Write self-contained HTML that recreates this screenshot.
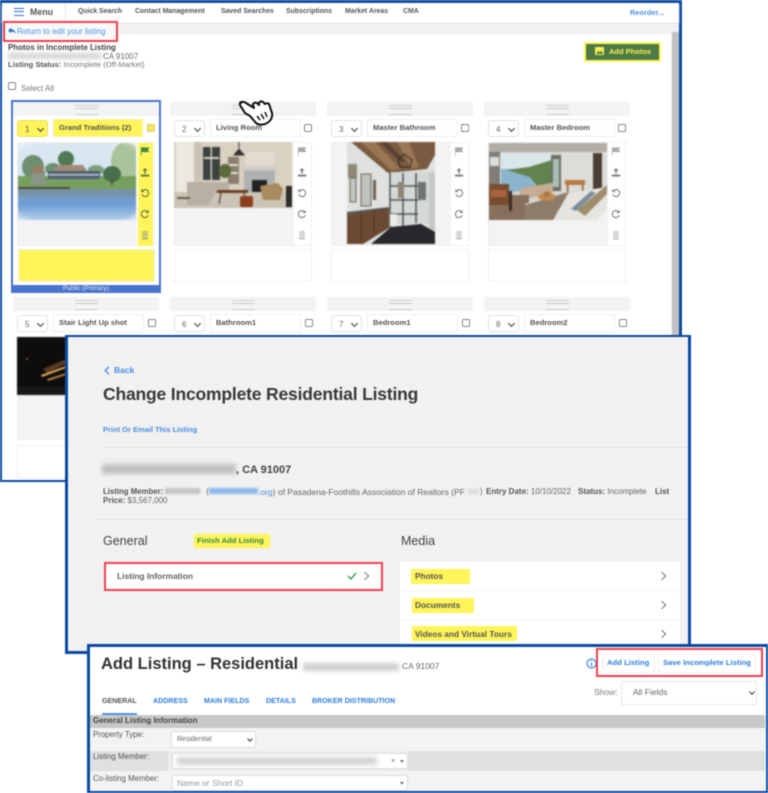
<!DOCTYPE html>
<html lang="en"><head><meta charset="utf-8"><title>Incomplete Listing</title>
<style>
*{box-sizing:border-box}
html,body{margin:0;padding:0;background:#fff}
body{width:768px;height:793px;overflow:hidden;position:relative;font-family:"Liberation Sans",sans-serif}
#root{position:absolute;left:0;top:0;width:768px;height:793px;filter:blur(.4px);overflow:hidden}
.a,.t{position:absolute}
.t{white-space:nowrap;line-height:1}
.nav{top:8.500px;font-size:6.900px;font-weight:700;color:#555}
.drag{position:absolute;width:146px;height:14px;background:#f3f3f3}
.drag:after{content:"";position:absolute;left:62px;top:3px;width:23px;height:8px;border-top:1px solid #ccc;border-bottom:1px solid #ccc;background:linear-gradient(#ccc,#ccc) 0 2px/100% 1px no-repeat}
.sel{position:absolute;width:31px;height:17px;border:1px solid #e2e2e2;border-radius:3px;background:#fff;font-size:8px;color:#666;padding:5px 0 0 7px;line-height:1}
.sel:after{content:"";position:absolute;right:4px;top:5px;width:4px;height:4px;border-right:1.400px solid #333;border-bottom:1.400px solid #333;transform:rotate(45deg)}
.nm{position:absolute;width:91px;height:18px;border:1px solid #eee;background:#fff;font-size:7.600px;font-weight:700;color:#555;padding:4px 0 0 5px;line-height:1;white-space:nowrap}
.cb{position:absolute;width:8px;height:8px;border:1px solid #888;border-radius:1.500px;background:#fff}
.well{position:absolute;width:138px;height:104px;border:1px solid #eee;background:#fff}
.gr{position:absolute;left:0;top:0;width:119px;height:102px;background:#f3f3f3}
.cap{position:absolute;width:138px;height:33px;border:1px solid #eee;background:#fff}
.ic{position:absolute;width:10px;height:10px;color:#aaa}
.blr{position:absolute;background:#c4c4c4;filter:blur(2px)}
.tab{top:698px;font-size:7.100px;font-weight:700;color:#2f7fd8}
.chev{position:absolute;width:6px;height:6px;border-top:1px solid #777;border-right:1px solid #777;transform:rotate(45deg)}
.lab{font-size:7.900px;color:#555}
</style></head><body>
<svg width="0" height="0" style="position:absolute">
<symbol id="flag" viewBox="0 0 12 12"><path d="M1.500 1.500v10M1.500 2h9l-1.500 2.500L10.500 7h-9z" fill="currentColor" stroke="currentColor" stroke-width=".8"/></symbol>
<symbol id="up" viewBox="0 0 12 12"><path d="M6 1 2.800 4.500H5v3.500h2V4.500h2.200zM1 9h10v2.500H1z" fill="currentColor"/></symbol>
<symbol id="undo" viewBox="0 0 12 12"><path d="M3 3.400A4.200 4.200 0 1 1 2.200 7.500" fill="none" stroke="currentColor" stroke-width="1.400"/><path d="M1.500 1v4h4z" fill="currentColor"/></symbol>
<symbol id="redo" viewBox="0 0 12 12"><path d="M9 3.400A4.200 4.200 0 1 0 9.800 7.500" fill="none" stroke="currentColor" stroke-width="1.400"/><path d="M10.500 1v4h-4z" fill="currentColor"/></symbol>
<symbol id="trash" viewBox="0 0 12 12"><path d="M4.500 1h3v1H10v1.500H2V2h2.500zM2.800 4.200h6.400V11.500H2.800z" fill="currentColor" opacity=".8"/><path d="M3.500 6.500h5M3.500 8.500h5" stroke="#fff" stroke-width=".6"/></symbol>
</svg>
<div id="root">

<!-- PANEL 1 -->
<div class="a" style="left:0;top:0;width:682px;height:482px;border:2px solid #0b4aa2;border-top-width:3px;border-right-width:3px;background:#fff"></div>
<div class="a" style="left:2px;top:3px;width:677px;height:20px;background:#fff;box-shadow:0 1px 2px #ccc"></div>
<div class="a" style="left:2px;top:24px;width:669px;height:11px;background:#f3f3f3"></div>
<div class="a" style="left:671px;top:24px;width:8px;height:455px;background:#f1f1f1"></div>
<div class="a" style="left:672px;top:32px;width:7px;height:447px;background:#c1c1c1"></div>
<div class="a" style="left:14px;top:8px;width:10px;height:8px;border-top:1.500px solid #2a6fc4;border-bottom:1.500px solid #2a6fc4"><div class="a" style="left:0;top:1.800px;width:10px;height:1.500px;background:#2a6fc4"></div></div>
<div class="t" style="left:30px;top:8px;font-size:8.800px;color:#555;font-weight:700">Menu</div>
<div class="a" style="left:65px;top:3px;width:1px;height:20px;background:#e4e4e4"></div>
<div class="t nav" style="left:78px">Quick Search</div>
<div class="t nav" style="left:135px">Contact Management</div>
<div class="t nav" style="left:221px">Saved Searches</div>
<div class="t nav" style="left:286px">Subscriptions</div>
<div class="t nav" style="left:345px">Market Areas</div>
<div class="t nav" style="left:403px">CMA</div>
<div class="t nav" style="left:630px;color:#4d8fe0;font-size:7.400px">Reorder...</div>

<div class="a" style="left:3px;top:21px;width:115px;height:21px;border:2px solid #f0404e;background:#f8f8f8"></div>
<svg class="a" style="left:8px;top:27px" width="8" height="8" viewBox="0 0 8 8"><path d="M3.200.6 0 3.500l3.200 2.900V4.600c2 0 3.300.5 4.300 2.200C7.200 4.200 5.800 2.400 3.200 2.300z" fill="#2a6fc4"/></svg>
<div class="t" style="left:17px;top:27.500px;font-size:8px;color:#4a96e6">Return to edit your listing</div>
<div class="t" style="left:8px;top:43.500px;font-size:7.900px;font-weight:700;color:#444">Photos in Incomplete Listing</div>
<div class="blr" style="left:8px;top:53px;width:93px;height:6px;background:#d4d4d4"></div>
<div class="t" style="left:103px;top:52.500px;font-size:8px;color:#666">CA 91007</div>
<div class="t" style="left:8px;top:60.500px;font-size:7.700px;color:#777"><b style="color:#555">Listing Status:</b> Incomplete (Off-Market)</div>
<div class="cb" style="left:8px;top:82px"></div>
<div class="t" style="left:21px;top:85px;font-size:8px;color:#777">Select All</div>

<div class="a" style="left:584px;top:42px;width:77px;height:20px;background:#4f7a46;border:2px solid #fff45a"></div>
<svg class="a" style="left:595px;top:47px" width="9" height="8" viewBox="0 0 9 8"><rect width="9" height="8" rx="1" fill="#f4ef55"/><path d="M1 7l2.500-3 1.500 1.500L6.500 3.500 8 7z" fill="#4f7a46"/></svg>
<div class="t" style="left:609px;top:47.500px;font-size:7.500px;font-weight:700;color:#f4ef55">Add Photos</div>

<!-- card 1 -->
<div class="a" style="left:11px;top:100px;width:150px;height:193px;border:2px solid #4a75cc;background:#fff"></div>
<div class="a" style="left:11px;top:285px;width:150px;height:8px;background:#4a75cc;color:#dfe8fa;font-size:6.500px;line-height:8px;text-align:center">Public (Primary)</div>
<div class="drag" style="left:13px;top:102px"></div>
<div class="drag" style="left:170px;top:102px"></div>
<div class="drag" style="left:327px;top:102px"></div>
<div class="drag" style="left:484px;top:102px"></div>

<div class="sel" style="left:17px;top:120px;background:#fff45a;border-color:#e8e060;color:#555">1</div>
<div class="nm" style="left:53px;top:119px;width:90px;background:#fff45a;border-color:#f0f0b0">Grand Traditions (2)</div>
<div class="cb" style="left:147px;top:124px;background:#f3ea5a;border-color:#d0cc70"></div>
<div class="sel" style="left:174px;top:120px">2</div><div class="nm" style="left:210px;top:119px">Living Room</div><div class="cb" style="left:304px;top:124px"></div>
<div class="sel" style="left:331px;top:120px">3</div><div class="nm" style="left:367px;top:119px">Master Bathroom</div><div class="cb" style="left:461px;top:124px"></div>
<div class="sel" style="left:488px;top:120px">4</div><div class="nm" style="left:524px;top:119px">Master Bedroom</div><div class="cb" style="left:618px;top:124px"></div>

<div class="well" style="left:17px;top:142px"><div class="gr"></div></div>
<div class="well" style="left:174px;top:142px"><div class="gr"></div></div>
<div class="well" style="left:331px;top:142px"><div class="gr"></div></div>
<div class="well" style="left:488px;top:142px"><div class="gr"></div></div>

<div class="a" style="left:138px;top:143px;width:15px;height:103px;background:#fff45a"></div>

<!-- lake -->
<svg class="a" style="left:18px;top:143px;filter:blur(.6px)" width="118" height="77" viewBox="0 0 118 77">
<defs><linearGradient id="sk" x1="0" y1="0" x2="0" y2="1"><stop offset="0" stop-color="#dde8f0"/><stop offset="1" stop-color="#c4def4"/></linearGradient>
<linearGradient id="lk" x1="0" y1="0" x2="0" y2="1"><stop offset="0" stop-color="#7e9cb8"/><stop offset=".5" stop-color="#6f9ed6"/><stop offset="1" stop-color="#b4cfe9"/></linearGradient>
<radialGradient id="vg" cx=".5" cy=".5" r=".75"><stop offset=".82" stop-color="#fff" stop-opacity="0"/><stop offset="1" stop-color="#fff" stop-opacity=".85"/></radialGradient></defs>
<rect width="118" height="77" fill="url(#sk)"/>
<ellipse cx="15" cy="24" rx="11" ry="12" fill="#6f8f70"/><ellipse cx="48" cy="16" rx="8" ry="8" fill="#4e7a55"/><ellipse cx="108" cy="18" rx="15" ry="19" fill="#a9c49a"/><ellipse cx="35" cy="26" rx="8" ry="6" fill="#6e9272"/><ellipse cx="78" cy="27" rx="8" ry="5" fill="#7f9f78"/>
<rect x="0" y="33" width="118" height="13" fill="#76a05f"/>
<path d="M36 28l4-6h25l4 6z" fill="#a58a76"/><rect x="30" y="28" width="52" height="8" fill="#4f6074"/><rect x="31" y="31" width="50" height="1.500" fill="#c6cfd2"/>
<path d="M12 30l8-9 8 9z" fill="#9c7c62"/><rect x="13" y="30" width="14" height="12" fill="#8a9488"/>
<ellipse cx="94" cy="31" rx="9" ry="8" fill="#47704a"/><rect x="93" y="36" width="1.500" height="6" fill="#543"/>
<rect x="0" y="44" width="52" height="2.500" fill="#4c4b33"/>
<rect y="46" width="118" height="31" fill="url(#lk)"/><rect y="46" width="118" height="8" fill="#6f8a8c" opacity=".45"/>
<rect width="118" height="77" fill="url(#vg)"/>
</svg>
<!-- living -->
<svg class="a" style="left:174px;top:142px;filter:blur(.6px)" width="118" height="66" viewBox="0 0 118 66">
<rect width="118" height="66" fill="#d9d1c2"/>
<rect x="2" width="18" height="52" fill="#ece8df"/><rect x="20" width="8" height="50" fill="#cbc4b6"/>
<rect x="29" y="5" width="17" height="33" fill="#3c4240"/><rect x="30" y="15" width="15" height="2" fill="#d8d4c8"/><rect x="36.500" y="5" width="1.500" height="33" fill="#cfcac0"/>
<rect x="54" y="15" width="11" height="27" fill="#8a7f6c"/><rect x="55" y="22" width="9" height="2" fill="#e8e2d4"/><rect x="55" y="30" width="9" height="2" fill="#e8e2d4"/>
<rect x="70" y="28" width="31" height="23" fill="#aeb2b2"/><rect x="68" y="26" width="35" height="3" fill="#c8c9c6"/><rect x="78" y="38" width="15" height="13" fill="#222"/>
<rect x="72" y="10" width="28" height="14" fill="#e2dbce"/>
<path d="M65 0v6M60 13h10l-5-6z" stroke="#333" fill="#333"/>
<path d="M0 50h118v16H0z" fill="#cbc4b5"/>
<path d="M13 40h42v8l-14 3-6 12H13z" fill="#b7b0a3"/>
<rect x="43" y="48" width="31" height="3" fill="#6b3f26"/><path d="M47 51l-2 11M70 51l2 8" stroke="#3a2a20"/>
<rect x="66" y="54" width="13" height="11" rx="2" fill="#8b3f1f"/>
<path d="M86 44l18-3 5 6-3 11H89z" fill="#a98b5f"/><rect x="112" y="44" width="6" height="21" fill="#2e2a27"/>
<ellipse cx="51" cy="29" rx="6" ry="7" fill="#5b6b3c"/><rect x="3" y="55" width="13" height="2" fill="#6a5a48"/>
</svg>
<!-- bath -->
<svg class="a" style="left:347px;top:142px;filter:blur(.6px)" width="88" height="102" viewBox="0 0 88 102">
<rect width="88" height="102" fill="#dfe1df"/>
<path d="M4 0h84v13L80 27 41 31z" fill="#7a5b41"/><path d="M14 0l30 28 10-1L28 0zM50 0l14 26 8-1L62 0z" fill="#9a7652"/><path d="M32 0l22 20 4-1L40 0z" fill="#5a4232"/>
<path d="M44 30h40v52H44z" fill="#d4d8d6"/>
<path d="M43 31v56M56 31v54M69 31v50M43 44h28M43 58h28M43 72h28" stroke="#3b3f40" stroke-width="1.300" fill="none"/>
<rect x="51" y="40" width="6" height="16" fill="#8e8577"/><rect x="71" y="40" width="8" height="18" fill="#6e7674"/><rect x="82" y="30" width="6" height="60" fill="#c4c8c6"/>
<rect x="1" y="22" width="9" height="14" fill="#8f8a78"/><rect x="3" y="36" width="6" height="24" fill="#c3c7c3" stroke="#5a4a3a" stroke-width=".8"/><rect x="14" y="32" width="10" height="32" fill="#bfc3bf" stroke="#5a4a3a" stroke-width=".8"/><rect x="26" y="38" width="3" height="20" fill="#6b6456"/>
<path d="M0 70l42-5v2L0 73z" fill="#54585a"/><path d="M0 73l42-7v20L16 102H0z" fill="#6b4a33"/><path d="M14 70v30M27 68v24" stroke="#4a3324" stroke-width="1"/>
<path d="M24 102l20-17 30-3 14 8v12z" fill="#26282c"/><rect x="43" y="72" width="7" height="12" fill="#ecece9"/>
<path d="M57 12l-6 6 2 7h10l2-7z" fill="none" stroke="#2a2a2a"/>
</svg>
<!-- bed -->
<svg class="a" style="left:489px;top:143px;filter:blur(.6px)" width="118" height="77" viewBox="0 0 118 77">
<rect width="118" height="77" fill="#d4d3ce"/><rect width="118" height="9" fill="#b1aea3"/><rect x="0" y="9" width="12" height="38" fill="#7f7d76"/><rect x="1" y="14" width="9" height="9" fill="#ddd"/>
<rect x="11" y="10" width="52" height="38" fill="#d9e6ea"/><path d="M12 26h51v21l-51 2z" fill="#8ab4cb"/><path d="M18 27l22-3 23-7v22l-14 5-8-10z" fill="#62824f"/>
<rect x="62" y="12" width="10" height="36" fill="#6f6d64"/><rect x="64" y="16" width="6" height="28" fill="#a9bfb2"/>
<rect x="72" y="9" width="46" height="40" fill="#dcdcd8"/><rect x="104" y="10" width="9" height="37" fill="#4b4038"/><rect x="76" y="37" width="20" height="5" fill="#b97a43"/><rect x="78" y="42" width="1.500" height="7" fill="#8a5a30"/><rect x="93" y="42" width="1.500" height="7" fill="#8a5a30"/>
<path d="M31 45l33-5v10l-33 7z" fill="#c7ac94"/><path d="M0 52h40v25H0z" fill="#86705d"/>
<rect x="0" y="41" width="20" height="21" fill="#7a4d30"/><rect x="2" y="47" width="15" height="7" fill="#a7653c"/><rect x="20" y="48" width="3" height="20" fill="#3a2c24"/>
<path d="M36 77V61l30-9 52-8v33z" fill="#e6e4de"/><path d="M36 77V62l30-9 14-4-16 28z" fill="#8d7c68"/>
<path d="M88 67l30-25v9l-22 22z" fill="#a08d6e"/><path d="M82 66l20-18 5 2-20 18z" fill="#7a8f9c"/><path d="M108 77l10-10v10z" fill="#f2f2f0"/>
<ellipse cx="58" cy="54" rx="9" ry="3.500" fill="#c48a4f"/><ellipse cx="58" cy="51" rx="4" ry="3" fill="#b07a44"/>
</svg>

<svg class="ic" style="left:140px;top:146px;color:#3f8a4a"><use href="#flag"/></svg>
<svg class="ic" style="left:140px;top:167px;color:#6f8040"><use href="#up"/></svg>
<svg class="ic" style="left:140px;top:188px;color:#6f7a3a"><use href="#undo"/></svg>
<svg class="ic" style="left:140px;top:209px;color:#6f7a3a"><use href="#redo"/></svg>
<svg class="ic" style="left:140px;top:230px;color:#a5a85c"><use href="#trash"/></svg>

<svg class="ic" style="left:297px;top:146px"><use href="#flag"/></svg><svg class="ic" style="left:297px;top:167px;color:#888"><use href="#up"/></svg><svg class="ic" style="left:297px;top:188px;color:#888"><use href="#undo"/></svg><svg class="ic" style="left:297px;top:209px;color:#888"><use href="#redo"/></svg><svg class="ic" style="left:297px;top:230px;color:#bbb"><use href="#trash"/></svg>
<svg class="ic" style="left:454px;top:146px"><use href="#flag"/></svg><svg class="ic" style="left:454px;top:167px;color:#888"><use href="#up"/></svg><svg class="ic" style="left:454px;top:188px;color:#888"><use href="#undo"/></svg><svg class="ic" style="left:454px;top:209px;color:#888"><use href="#redo"/></svg><svg class="ic" style="left:454px;top:230px;color:#bbb"><use href="#trash"/></svg>
<svg class="ic" style="left:611px;top:146px"><use href="#flag"/></svg><svg class="ic" style="left:611px;top:167px;color:#888"><use href="#up"/></svg><svg class="ic" style="left:611px;top:188px;color:#888"><use href="#undo"/></svg><svg class="ic" style="left:611px;top:209px;color:#888"><use href="#redo"/></svg><svg class="ic" style="left:611px;top:230px;color:#bbb"><use href="#trash"/></svg>

<div class="cap" style="left:17px;top:249px"></div>
<div class="a" style="left:19px;top:250px;width:135px;height:31px;background:#fff45a"></div>
<div class="cap" style="left:174px;top:249px"></div>
<div class="cap" style="left:331px;top:249px"></div>
<div class="cap" style="left:488px;top:249px"></div>

<!-- row 2 -->
<div class="drag" style="left:13px;top:297px"></div>
<div class="drag" style="left:170px;top:297px"></div>
<div class="drag" style="left:327px;top:297px"></div>
<div class="drag" style="left:484px;top:297px"></div>
<div class="sel" style="left:17px;top:315px">5</div><div class="nm" style="left:53px;top:314px">Stair Light Up shot</div><div class="cb" style="left:148px;top:319px"></div>
<div class="sel" style="left:174px;top:315px">6</div><div class="nm" style="left:210px;top:314px">Bathroom1</div><div class="cb" style="left:305px;top:319px"></div>
<div class="sel" style="left:331px;top:315px">7</div><div class="nm" style="left:367px;top:314px">Bedroom1</div><div class="cb" style="left:462px;top:319px"></div>
<div class="sel" style="left:488px;top:315px">8</div><div class="nm" style="left:524px;top:314px">Bedroom2</div><div class="cb" style="left:619px;top:319px"></div>
<div class="a" style="left:17px;top:337px;width:49px;height:103px;background:#f3f3f3"></div>
<svg class="a" style="left:17px;top:337px;filter:blur(.6px)" width="49" height="58" viewBox="0 0 49 58"><rect width="49" height="58" fill="#0e0d0c"/><path d="M26 32 49 22v5L30 36z" fill="#5a3a22"/><path d="M24 38 49 29v2L25 40z" fill="#e0a750"/><path d="M30 42 49 36v2L31 44z" fill="#a97c3e"/><rect x="0" y="50" width="49" height="8" fill="#17181a"/><circle cx="10" cy="22" r="1" fill="#8a7a50"/></svg>
<div class="a" style="left:17px;top:445px;width:49px;height:33px;background:#fff;border:1px solid #eee"></div>

<!-- hand cursor -->
<svg class="a" style="left:239px;top:99px" width="35" height="28" viewBox="0 0 35 28">
<path d="M2 4c1-2 4-1 5 0l8 5-1-3c0-2 2-3 4-2l2 2 0-2c1-2 3-2 4-1l2 2c1-1 3-1 4 0l3 9c1 5-2 9-7 11-3 1-7 1-9-1l-6-7-5-3-5-8c-1-1-1-2 1-3z" fill="#fff" stroke="#111" stroke-width="2" stroke-linejoin="round"/>
<path d="M18 17l3 4M22 15l3 5M26 13l2 5" stroke="#111" stroke-width="1.500"/>
</svg>

<!-- PANEL 2 -->
<div class="a" style="left:65px;top:335px;width:626px;height:319px;background:#f1f1f1;border:3px solid #0b4aa2;border-top-width:2px"></div>
<svg class="a" style="left:104px;top:366px" width="6" height="9" viewBox="0 0 6 9"><path d="M5 .8 1.200 4.500 5 8.200" fill="none" stroke="#3b85dd" stroke-width="1.200"/></svg>
<div class="t" style="left:114px;top:366px;font-size:8.500px;font-weight:700;color:#4a8fe0">Back</div>
<div class="t" style="left:103px;top:386px;font-size:17.500px;font-weight:700;color:#3a3a3a;letter-spacing:-.18px">Change Incomplete Residential Listing</div>
<div class="t" style="left:103px;top:426px;font-size:7.500px;font-weight:700;color:#4a8fe0">Print Or Email This Listing</div>
<div class="a" style="left:103px;top:447px;width:585px;height:1px;background:#e2e2e2"></div>
<div class="blr" style="left:102px;top:464px;width:134px;height:10px;background:#c0c0c0"></div>
<div class="t" style="left:236px;top:464.500px;font-size:11px;font-weight:700;color:#444">, CA 91007</div>
<div class="t" style="left:103px;top:488px;font-size:7.800px;color:#666"><b style="color:#555">Listing Member:</b></div>
<div class="blr" style="left:165px;top:488px;width:35px;height:6px;filter:blur(1px)"></div>
<div class="t" style="left:206px;top:488px;font-size:8px;color:#666">(</div>
<div class="blr" style="left:209px;top:488px;width:49px;height:6px;background:#8bb7ea;filter:blur(1px)"></div>
<div class="t" style="left:258px;top:488px;font-size:8.500px;color:#666"><span style="color:#4a8fe0">.org</span>) of Pasadena-Foothills Association of Realtors (PF</div>
<div class="blr" style="left:468px;top:489px;width:11px;height:5px;background:#ddd;filter:blur(1px)"></div>
<div class="t" style="left:480px;top:488px;font-size:8px;color:#666">)</div>
<div class="t" style="left:486px;top:488px;font-size:8px;color:#666"><b style="color:#555">Entry Date:</b> 10/10/2022</div>
<div class="t" style="left:578px;top:488px;font-size:8px;color:#666"><b style="color:#555">Status:</b> Incomplete</div>
<div class="t" style="left:655px;top:488px;font-size:8px;font-weight:700;color:#555">List</div>
<div class="t" style="left:103px;top:497px;font-size:8px;color:#666"><b style="color:#555">Price:</b> $3,567,000</div>
<div class="a" style="left:95px;top:519px;width:593px;height:1px;background:#e2e2e2"></div>
<div class="t" style="left:103px;top:535px;font-size:12.500px;color:#444">General</div>
<div class="t" style="left:401px;top:535px;font-size:12.500px;color:#444">Media</div>
<div class="a" style="left:194px;top:534px;width:76px;height:14px;background:#fff45a"></div>
<div class="t" style="left:197px;top:537px;font-size:7.700px;font-weight:700;color:#2f8a4a">Finish Add Listing</div>
<div class="a" style="left:104px;top:562px;width:279px;height:29px;background:#fff;border:2px solid #f0404e"></div>
<div class="t" style="left:117px;top:572px;font-size:8.500px;color:#666;font-weight:700;letter-spacing:-.05px">Listing Information</div>
<svg class="a" style="left:347px;top:572px" width="10" height="8" viewBox="0 0 10 8"><path d="M1 4l3 3 5-6" fill="none" stroke="#3a9a58" stroke-width="1.400"/></svg>
<div class="chev" style="left:362px;top:573px"></div>
<div class="a" style="left:400px;top:562px;width:280px;height:28px;background:#fff"></div>
<div class="a" style="left:400px;top:591px;width:280px;height:28px;background:#fff"></div>
<div class="a" style="left:400px;top:620px;width:280px;height:25px;background:#fff"></div>
<div class="a" style="left:411px;top:569px;width:59px;height:15px;background:#fff45a"></div>
<div class="a" style="left:412px;top:598px;width:62px;height:15px;background:#fff45a"></div>
<div class="a" style="left:412px;top:626px;width:105px;height:15px;background:#fff45a"></div>
<div class="t" style="left:415px;top:572px;font-size:8.300px;font-weight:700;color:#555">Photos</div>
<div class="t" style="left:415px;top:601px;font-size:8.300px;font-weight:700;color:#555">Documents</div>
<div class="t" style="left:415px;top:630px;font-size:8.300px;font-weight:700;color:#555">Videos and Virtual Tours</div>
<div class="chev" style="left:659px;top:573px"></div>
<div class="chev" style="left:659px;top:602px"></div>
<div class="chev" style="left:659px;top:631px"></div>

<!-- PANEL 3 -->
<div class="a" style="left:87px;top:644px;width:681px;height:149px;background:#fff;border:3px solid #0b4aa2;border-right-width:2px;border-bottom-width:2px"></div>
<div class="t" style="left:101px;top:656px;font-size:16.500px;font-weight:700;color:#333">Add Listing – Residential</div>
<div class="blr" style="left:303px;top:663px;width:96px;height:8px;background:#d0d0d0"></div>
<div class="t" style="left:402px;top:662px;font-size:8.500px;color:#666">CA 91007</div>
<svg class="a" style="left:586px;top:658px" width="11" height="11" viewBox="0 0 11 11"><circle cx="5.500" cy="5.500" r="4.500" fill="#fff" stroke="#3b85dd" stroke-width="1.200"/><path d="M5.500 4.500V8.500M5.500 2.500V3.500" stroke="#3b85dd" stroke-width="1.200"/></svg>
<div class="a" style="left:596px;top:648px;width:167px;height:29px;border:2px solid #f0404e;background:#fff"></div>
<div class="a" style="left:602px;top:654px;width:53px;height:19px;border:1px solid #eee;border-radius:2px"></div>
<div class="a" style="left:658px;top:654px;width:98px;height:19px;border:1px solid #eee;border-radius:2px"></div>
<div class="t" style="left:607px;top:659px;font-size:7.700px;font-weight:700;color:#2f7fd8">Add Listing</div>
<div class="t" style="left:663px;top:659px;font-size:7.700px;font-weight:700;color:#2f7fd8">Save Incomplete Listing</div>
<div class="t" style="left:594px;top:688px;font-size:8.500px;color:#777">Show:</div>
<div class="a" style="left:621px;top:681px;width:136px;height:24px;border:1px solid #e6e6e6;border-radius:2px;background:#fff"></div>
<div class="t" style="left:633px;top:688px;font-size:8.500px;color:#666">All Fields</div>
<div class="a" style="left:750px;top:690px;width:4px;height:4px;border-right:1.300px solid #333;border-bottom:1.300px solid #333;transform:rotate(45deg)"></div>

<div class="t tab" style="left:102px;color:#555">GENERAL</div>
<div class="t tab" style="left:153px">ADDRESS</div>
<div class="t tab" style="left:204px">MAIN FIELDS</div>
<div class="t tab" style="left:266px">DETAILS</div>
<div class="t tab" style="left:312px">BROKER DISTRIBUTION</div>
<div class="a" style="left:102px;top:713px;width:35px;height:2px;background:#4a96e6"></div>

<div class="a" style="left:90px;top:715px;width:675px;height:13px;background:#c8c8c8"></div>
<div class="t" style="left:93px;top:717px;font-size:8px;font-weight:700;color:#444">General Listing Information</div>
<div class="a" style="left:90px;top:728px;width:675px;height:23px;background:#f3f3f3"></div>
<div class="a" style="left:90px;top:751px;width:675px;height:20px;background:#e0e0e0"></div>
<div class="a" style="left:90px;top:771px;width:675px;height:20px;background:#f3f3f3"></div>
<div class="a" style="left:168px;top:751px;width:240px;height:20px;background:#ececec"></div>
<div class="t lab" style="left:93px;top:731px">Property Type:</div>
<div class="t lab" style="left:93px;top:753px">Listing Member:</div>
<div class="t lab" style="left:93px;top:775px">Co-listing Member:</div>
<div class="a" style="left:171px;top:731px;width:85px;height:17px;background:#fff;border:1px solid #ddd;border-radius:2px"></div>
<div class="t" style="left:177px;top:736px;font-size:7px;color:#666">Residential</div>
<div class="a" style="left:248px;top:737px;width:4px;height:4px;border-right:1.300px solid #333;border-bottom:1.300px solid #333;transform:rotate(45deg)"></div>
<div class="a" style="left:172px;top:753px;width:236px;height:16px;background:#fff;border:1px solid #ddd;border-radius:2px"></div>
<div class="blr" style="left:177px;top:757px;width:200px;height:8px;background:#d4d4d4"></div>
<div class="t" style="left:391px;top:758px;font-size:7px;color:#666">×</div>
<div class="a" style="left:400px;top:760px;border:2.500px solid transparent;border-top:3px solid #777"></div>
<div class="a" style="left:172px;top:775px;width:236px;height:16px;background:#fff;border:1px solid #ddd;border-radius:2px"></div>
<div class="t" style="left:177px;top:779px;font-size:8.500px;color:#999">Name or Short ID</div>
<div class="a" style="left:400px;top:782px;border:2.500px solid transparent;border-top:3px solid #777"></div>
</div>
</body></html>
